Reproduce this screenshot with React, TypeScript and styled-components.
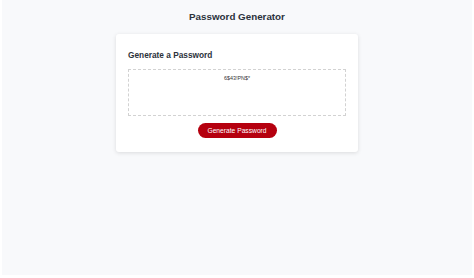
import styled, { createGlobalStyle } from "styled-components";

const GlobalStyle = createGlobalStyle`
  html, body {
    margin: 0;
    padding: 0;
    background: #ffffff;
  }
  * {
    box-sizing: border-box;
  }
`;

const Page = styled.div`
  height: 275px;
  margin: 0 2px 0 2px;
  background-color: #f8f9fb;
  display: flex;
  flex-direction: column;
  align-items: center;
  font-family: "Liberation Sans", Arial, sans-serif;
`;

const Title = styled.h1`
  margin: 11px 0 0;
  font-size: 9.8px;
  line-height: 11px;
  font-weight: 700;
  color: #2b323b;
`;

const Card = styled.section`
  margin-top: 12px;
  width: 242px;
  padding: 17px 12px 14px;
  background: #ffffff;
  border-radius: 3px;
  box-shadow: 0 1px 4px rgba(0, 0, 0, 0.12);
  display: flex;
  flex-direction: column;
`;

const CardTitle = styled.h2`
  margin: 0;
  font-size: 8.3px;
  line-height: 9.3px;
  font-weight: 700;
  color: #2b323b;
`;

const Output = styled.div`
  margin-top: 9px;
  height: 47px;
  padding-top: 5px;
  border: 1px dashed #d2d2d2;
  text-align: center;
  font-size: 5.4px;
  line-height: 6px;
  color: #333;
`;

const GenerateButton = styled.button`
  align-self: center;
  margin-top: 7px;
  width: 79px;
  height: 15px;
  padding: 0;
  border: none;
  border-radius: 8px;
  background-color: #b5000f;
  color: #ffffff;
  font-family: "Liberation Sans", Arial, sans-serif;
  font-size: 6.7px;
  cursor: pointer;
`;

export default function App() {
  return (
    <>
      <GlobalStyle />
      <Page>
        <Title>Password Generator</Title>
        <Card>
          <CardTitle>Generate a Password</CardTitle>
          <Output>6$43!PN$*</Output>
          <GenerateButton>Generate Password</GenerateButton>
        </Card>
      </Page>
    </>
  );
}
